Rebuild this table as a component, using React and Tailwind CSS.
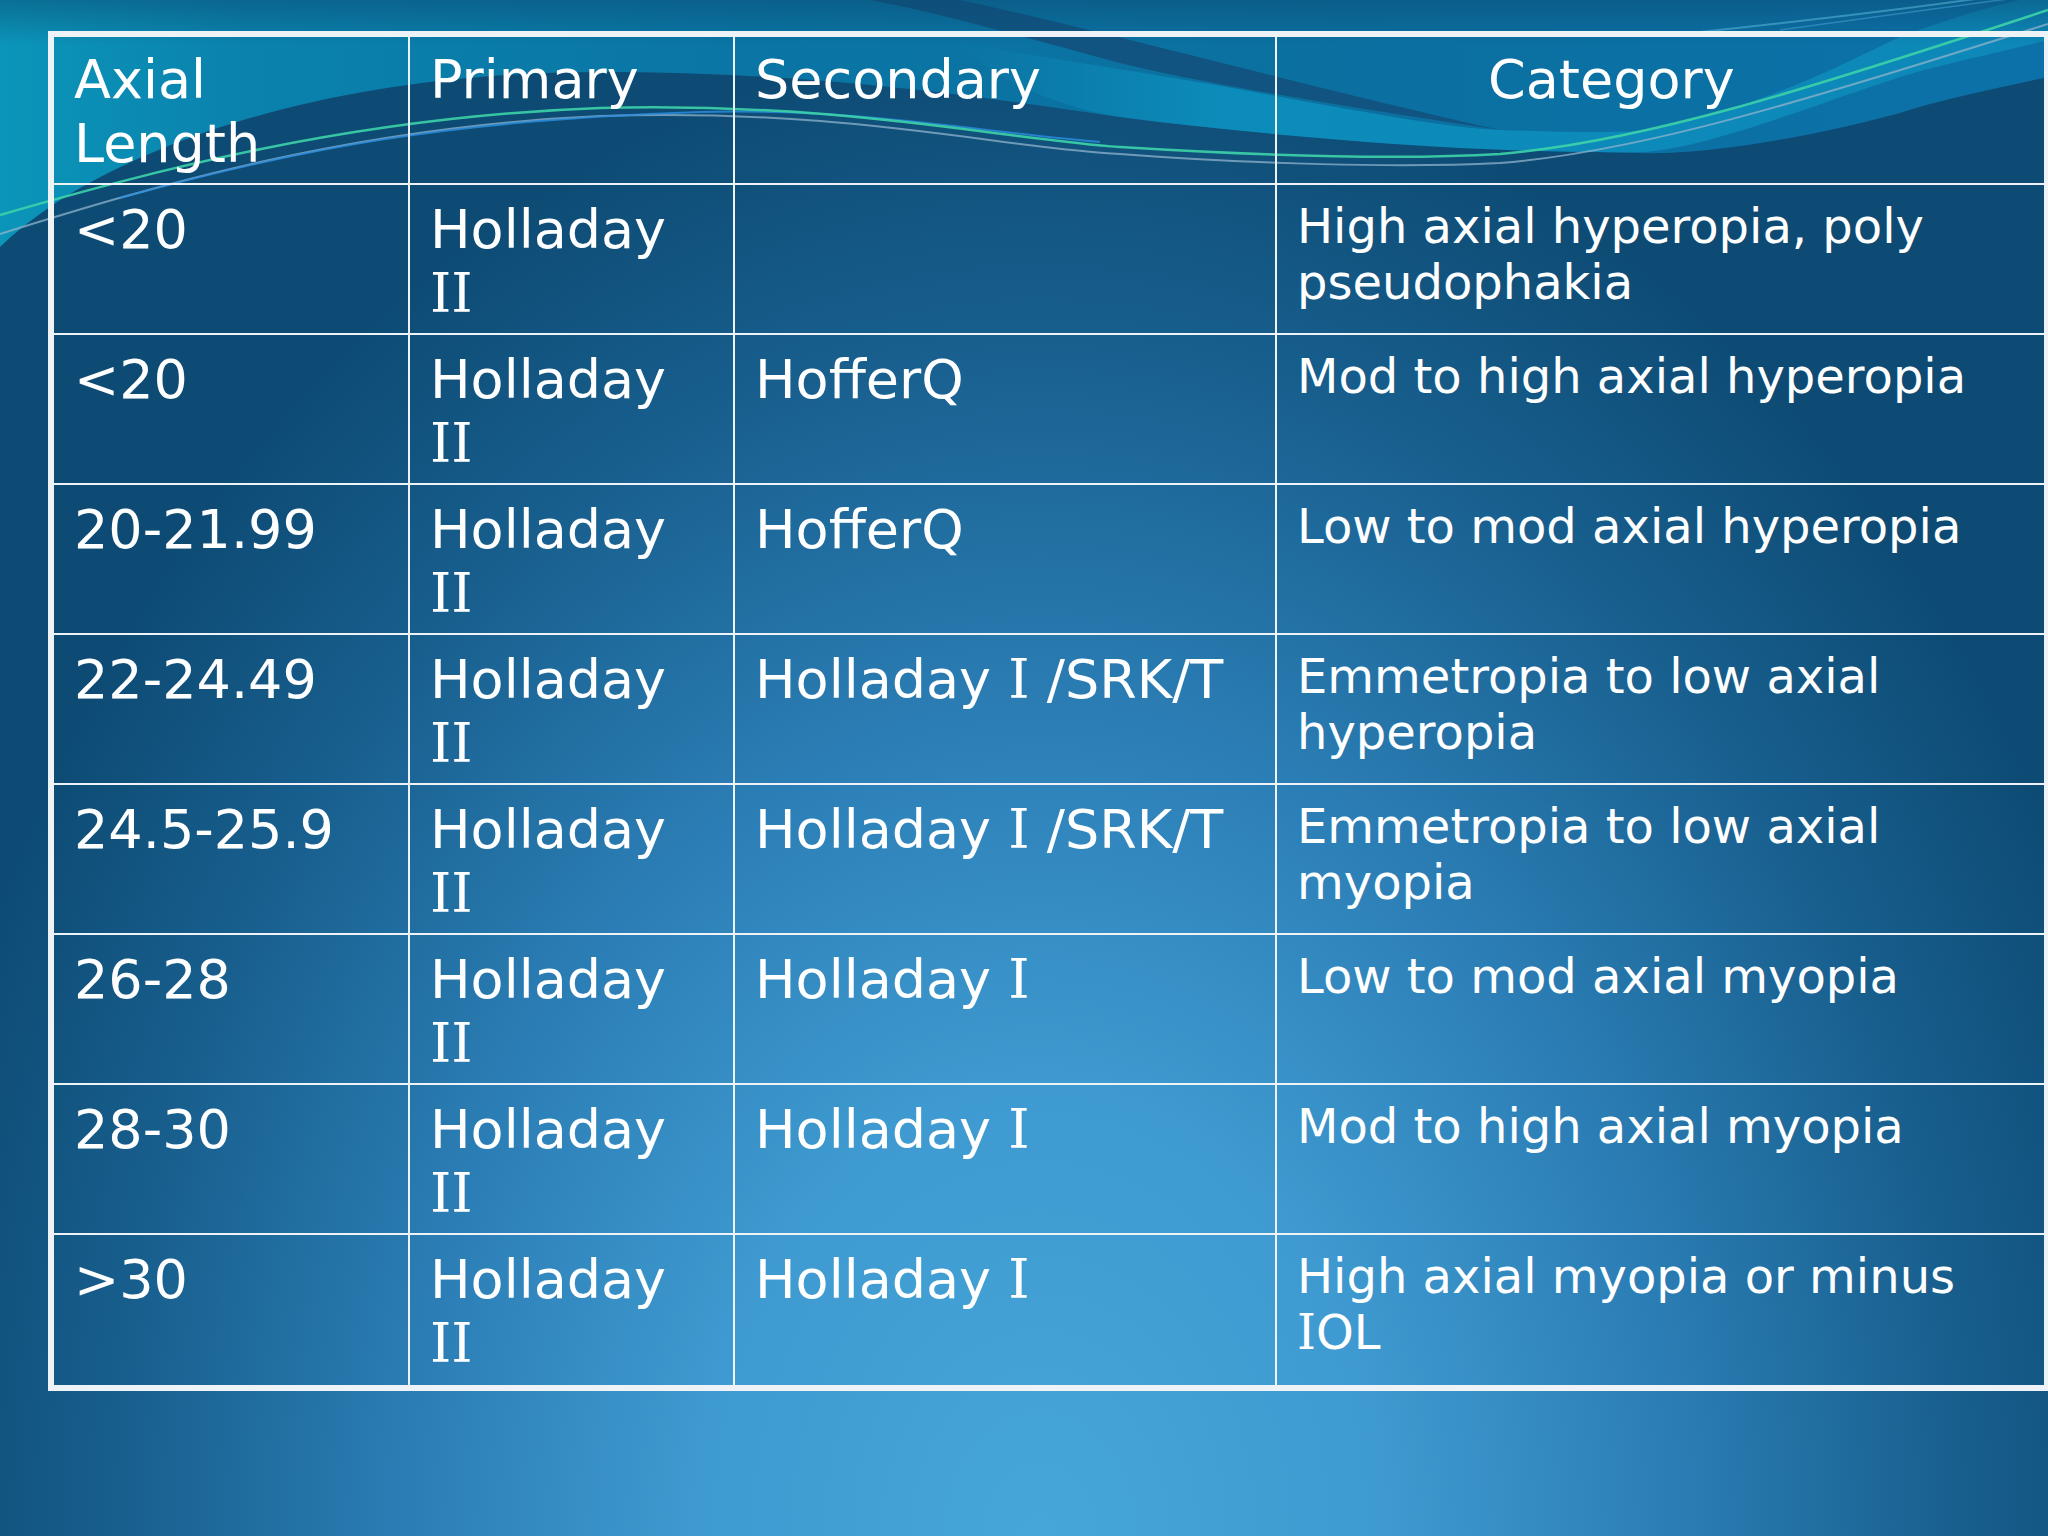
import React from 'react';

const rows = [
  ['<20', 'Holladay II', '', 'High axial hyperopia, poly pseudophakia'],
  ['<20', 'Holladay II', 'HofferQ', 'Mod to high axial hyperopia'],
  ['20-21.99', 'Holladay II', 'HofferQ', 'Low to mod axial hyperopia'],
  ['22-24.49', 'Holladay II', 'Holladay I /SRK/T', 'Emmetropia to low axial hyperopia'],
  ['24.5-25.9', 'Holladay II', 'Holladay I /SRK/T', 'Emmetropia to low axial myopia'],
  ['26-28', 'Holladay II', 'Holladay I', 'Low to mod axial myopia'],
  ['28-30', 'Holladay II', 'Holladay I', 'Mod to high axial myopia'],
  ['>30', 'Holladay II', 'Holladay I', 'High axial myopia or minus IOL'],
];

// the slide font draws a capital I with serifs
const Txt = ({ text }) =>
  text.split(/(I)/).map((part, i) =>
    part === 'I' ? (
      <span key={i} className="font-['DejaVu_Serif',serif]">I</span>
    ) : (
      <React.Fragment key={i}>{part}</React.Fragment>
    )
  );

const Background = () => (
  <svg className="absolute inset-0" width="2048" height="1536" viewBox="0 0 2048 1536">
    <defs>
      <radialGradient
        id="base"
        cx="1040"
        cy="1536"
        r="1150"
        gradientUnits="userSpaceOnUse"
        gradientTransform="translate(1040 1536) scale(1 1.3) translate(-1040 -1536)"
      >
        <stop offset="0" stopColor="#47a6d9" />
        <stop offset="0.3" stopColor="#3e9ad0" />
        <stop offset="0.55" stopColor="#2b7eb5" />
        <stop offset="0.8" stopColor="#185f8e" />
        <stop offset="1" stopColor="#0d4b74" />
      </radialGradient>
      <linearGradient id="teal" x1="0" y1="0" x2="2048" y2="0" gradientUnits="userSpaceOnUse">
        <stop offset="0" stopColor="#0b95b9" />
        <stop offset="0.12" stopColor="#0a82ad" />
        <stop offset="0.35" stopColor="#0a76a5" />
        <stop offset="0.65" stopColor="#0b70a0" />
        <stop offset="1" stopColor="#0b71a8" />
      </linearGradient>
      <linearGradient id="cyan" x1="950" y1="0" x2="2048" y2="0" gradientUnits="userSpaceOnUse">
        <stop offset="0" stopColor="#0c8cba" stopOpacity="0" />
        <stop offset="0.25" stopColor="#0c8cba" />
        <stop offset="1" stopColor="#0d88b8" />
      </linearGradient>
      <linearGradient id="topShade" x1="0" y1="0" x2="0" y2="45" gradientUnits="userSpaceOnUse">
        <stop offset="0" stopColor="#0a4a72" stopOpacity="0.5" />
        <stop offset="1" stopColor="#0a4a72" stopOpacity="0" />
      </linearGradient>
    </defs>
    <rect width="2048" height="1536" fill="url(#base)" />
    <path
      d="M0,0 H2048 V77 C1990,90 1940,100 1900,113 C1800,140 1700,155 1640,153 C1500,151 1250,135 1120,117 C950,92 800,72 600,72 C400,72 200,112 57,202 C35,217 15,232 0,247 Z"
      fill="url(#teal)"
    />
    <path
      d="M950,40 C1050,60 1150,72 1270,95 C1380,115 1450,128 1500,130 C1560,132 1600,133 1640,131 C1760,110 1850,60 1900,37 C1960,15 2010,0 2048,-5 V40 C1990,55 1950,62 1900,77 C1800,110 1700,150 1640,152 C1500,154 1300,140 1120,117 C1050,105 1000,80 950,40 Z"
      fill="url(#cyan)"
    />
    <path
      d="M870,0 L960,0 C1100,30 1300,85 1500,130 C1300,100 1180,78 1120,63 C1040,42 950,15 870,0 Z"
      fill="#12517d"
      opacity="0.9"
    />
    <rect width="2048" height="45" fill="url(#topShade)" />
    <path
      d="M0,234 C150,187 350,127 600,116 C850,108 1000,148 1120,154 C1250,164 1400,168 1500,163 C1640,152 1800,102 2048,24"
      fill="none"
      stroke="#8fb3cc"
      strokeWidth="2"
      opacity="0.75"
    />
    <path
      d="M120,198 C300,148 450,120 700,112 C860,108 980,132 1100,142"
      fill="none"
      stroke="#2b8ee0"
      strokeWidth="2"
      opacity="0.8"
    />
    <path
      d="M0,215 C150,172 350,117 600,108 C850,102 1000,139 1120,147 C1250,155 1400,160 1500,154 C1640,142 1800,92 2048,10"
      fill="none"
      stroke="#3dd3a8"
      strokeWidth="2.5"
      opacity="0.9"
    />
    <path d="M1700,32 C1850,16 1950,4 2048,-12" fill="none" stroke="#5fc0e0" strokeWidth="2" opacity="0.5" />
    <path d="M1780,30 C1900,14 1980,2 2048,-6" fill="none" stroke="#4aa8d8" strokeWidth="1.5" opacity="0.5" />
  </svg>
);

export default function App() {
  const cell = 'border-r-2 border-[#eef3f7] pl-[20px] pr-[20px]';
  const big = 'text-[54px] leading-[64px]';
  return (
    <div className="relative w-[2048px] h-[1536px] overflow-hidden bg-[#0c4a72] text-white font-['DejaVu_Sans',sans-serif]">
      <Background />
      <div className="relative ml-[48px] mt-[31px] w-[2004px] border-[6px] border-[#eef3f7]">
        <div className="grid grid-cols-[356px_325px_542px_769px]">
          {/* header */}
          <div className={`${cell} border-b-2 h-[148px] pt-[11px] ${big}`}>Axial Length</div>
          <div className={`${cell} border-b-2 h-[148px] pt-[11px] ${big}`}>Primary</div>
          <div className={`${cell} border-b-2 h-[148px] pt-[11px] ${big}`}>Secondary</div>
          <div className={`${cell} border-b-2 h-[148px] pt-[11px] pl-[211px] ${big}`}>Category</div>

          {rows.map((r, i) => {
            const last = i === rows.length - 1;
            const rb = last ? 'h-[150px]' : 'h-[150px] border-b-2';
            return (
              <React.Fragment key={i}>
                <div className={`${cell} ${rb} pt-[13px] ${big}`}>{r[0]}</div>
                <div className={`${cell} ${rb} pt-[13px] ${big}`}>
                  <Txt text={r[1]} />
                </div>
                <div className={`${cell} ${rb} pt-[13px] ${big}`}>
                  <Txt text={r[2]} />
                </div>
                <div className={`${cell} ${rb} pt-[13px] text-[48px] leading-[56px]`}>
                  <Txt text={r[3]} />
                </div>
              </React.Fragment>
            );
          })}
        </div>
      </div>
    </div>
  );
}
